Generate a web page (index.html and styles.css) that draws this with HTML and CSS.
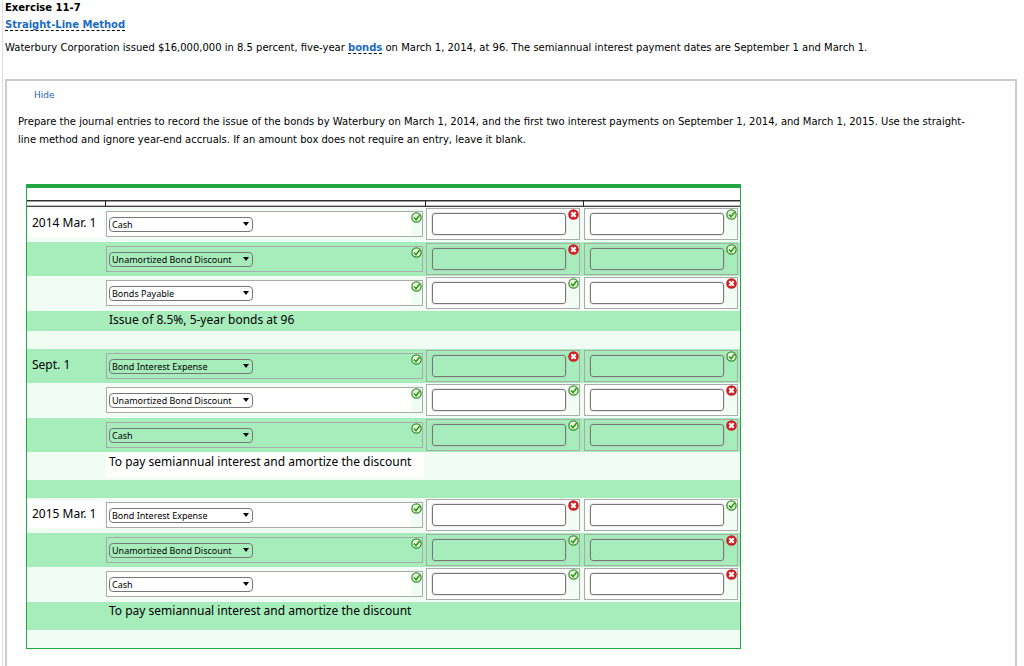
FILE: index.html
```html
<!DOCTYPE html>
<html lang="en">
<head>
  <meta charset="UTF-8" />
  <meta name="viewport" content="width=device-width, initial-scale=1.0"/>
  <title>Exercise 11-7</title>
  <link rel="stylesheet" href="styles.css">
</head>
<body>
  <svg class="sprite" width="0" height="0" aria-hidden="true">
    <symbol id="ok" viewBox="0 0 11 11" preserveAspectRatio="xMidYMin">
      <circle cx="5.5" cy="5.5" r="4.6" fill="#e9fbe0" stroke="#3b8f2c" stroke-width="1.3"/>
      <path d="M3 5.5l2 2.2L8.6 3" fill="none" stroke="#2b9a12" stroke-width="1.6"/>
    </symbol>
    <symbol id="bad" viewBox="0 0 11 11" preserveAspectRatio="xMidYMin">
      <circle cx="5.5" cy="5.5" r="5.3" fill="#cf1d22"/>
      <path d="M3.300 3.300l4.400 4.400M7.700 3.300L3.300 7.700" fill="none" stroke="#fff" stroke-width="2.2"/>
    </symbol>
  </svg>

  <h1>Exercise 11-7</h1>
  <h2><a class="term" href="#">Straight-Line Method</a></h2>
  <p class="intro">Waterbury Corporation issued $16,000,000 in 8.5 percent, five-year <a class="term" href="#">bonds</a> on March 1, 2014, at 96. The semiannual interest payment dates are September 1 and March 1.</p>

  <div class="panel">
    <a class="hide" href="#">Hide</a>
    <p class="question">Prepare the journal entries to record the issue of the bonds by Waterbury on March 1, 2014, and the first two interest payments on September 1, 2014, and March 1, 2015. Use the straight-line method and ignore year-end accruals. If an amount box does not require an entry, leave it blank.</p>

    <table class="journal">
      <colgroup>
        <col class="col-date"><col class="col-account"><col class="col-amount"><col class="col-amount">
      </colgroup>
      <thead>
        <tr class="band"><td colspan="4"></td></tr>
        <tr class="rule"><td></td><td></td><td></td><td></td></tr>
      </thead>
      <tbody>
        <tr class="light">
          <td class="date"><div>2014 Mar. 1</div></td>
          <td><div class="box account"><select aria-label="Account 1"><option>Cash</option></select><svg class="mark"><use href="#ok"/></svg></div></td>
          <td><div class="box amount"><input type="text" aria-label="Debit 1"><svg class="mark"><use href="#bad"/></svg></div></td>
          <td><div class="box amount"><input type="text" aria-label="Credit 1"><svg class="mark"><use href="#ok"/></svg></div></td>
        </tr>
        <tr class="green">
          <td></td>
          <td><div class="box account"><select aria-label="Account 2"><option>Unamortized Bond Discount</option></select><svg class="mark"><use href="#ok"/></svg></div></td>
          <td><div class="box amount"><input type="text" aria-label="Debit 2"><svg class="mark"><use href="#bad"/></svg></div></td>
          <td><div class="box amount"><input type="text" aria-label="Credit 2"><svg class="mark"><use href="#ok"/></svg></div></td>
        </tr>
        <tr class="light">
          <td></td>
          <td><div class="box account"><select aria-label="Account 3"><option>Bonds Payable</option></select><svg class="mark"><use href="#ok"/></svg></div></td>
          <td><div class="box amount"><input type="text" aria-label="Debit 3"><svg class="mark"><use href="#ok"/></svg></div></td>
          <td><div class="box amount"><input type="text" aria-label="Credit 3"><svg class="mark"><use href="#bad"/></svg></div></td>
        </tr>
        <tr class="green note short">
          <td></td>
          <td><div>Issue of 8.5%, 5-year bonds at 96</div></td>
          <td></td>
          <td></td>
        </tr>
        <tr class="light gap"><td colspan="4"></td></tr>

        <tr class="green">
          <td class="date"><div>Sept. 1</div></td>
          <td><div class="box account"><select aria-label="Account 4"><option>Bond Interest Expense</option></select><svg class="mark"><use href="#ok"/></svg></div></td>
          <td><div class="box amount"><input type="text" aria-label="Debit 4"><svg class="mark"><use href="#bad"/></svg></div></td>
          <td><div class="box amount"><input type="text" aria-label="Credit 4"><svg class="mark"><use href="#ok"/></svg></div></td>
        </tr>
        <tr class="light">
          <td></td>
          <td><div class="box account"><select aria-label="Account 5"><option>Unamortized Bond Discount</option></select><svg class="mark"><use href="#ok"/></svg></div></td>
          <td><div class="box amount"><input type="text" aria-label="Debit 5"><svg class="mark"><use href="#ok"/></svg></div></td>
          <td><div class="box amount"><input type="text" aria-label="Credit 5"><svg class="mark"><use href="#bad"/></svg></div></td>
        </tr>
        <tr class="green">
          <td></td>
          <td><div class="box account"><select aria-label="Account 6"><option>Cash</option></select><svg class="mark"><use href="#ok"/></svg></div></td>
          <td><div class="box amount"><input type="text" aria-label="Debit 6"><svg class="mark"><use href="#ok"/></svg></div></td>
          <td><div class="box amount"><input type="text" aria-label="Credit 6"><svg class="mark"><use href="#bad"/></svg></div></td>
        </tr>
        <tr class="light note">
          <td></td>
          <td><div>To pay semiannual interest and amortize the discount</div></td>
          <td></td>
          <td></td>
        </tr>
        <tr class="green gap"><td colspan="4"></td></tr>

        <tr class="light">
          <td class="date"><div>2015 Mar. 1</div></td>
          <td><div class="box account"><select aria-label="Account 7"><option>Bond Interest Expense</option></select><svg class="mark"><use href="#ok"/></svg></div></td>
          <td><div class="box amount"><input type="text" aria-label="Debit 7"><svg class="mark"><use href="#bad"/></svg></div></td>
          <td><div class="box amount"><input type="text" aria-label="Credit 7"><svg class="mark"><use href="#ok"/></svg></div></td>
        </tr>
        <tr class="green">
          <td></td>
          <td><div class="box account"><select aria-label="Account 8"><option>Unamortized Bond Discount</option></select><svg class="mark"><use href="#ok"/></svg></div></td>
          <td><div class="box amount"><input type="text" aria-label="Debit 8"><svg class="mark"><use href="#ok"/></svg></div></td>
          <td><div class="box amount"><input type="text" aria-label="Credit 8"><svg class="mark"><use href="#bad"/></svg></div></td>
        </tr>
        <tr class="light">
          <td></td>
          <td><div class="box account"><select aria-label="Account 9"><option>Cash</option></select><svg class="mark"><use href="#ok"/></svg></div></td>
          <td><div class="box amount"><input type="text" aria-label="Debit 9"><svg class="mark"><use href="#ok"/></svg></div></td>
          <td><div class="box amount"><input type="text" aria-label="Credit 9"><svg class="mark"><use href="#bad"/></svg></div></td>
        </tr>
        <tr class="green note">
          <td></td>
          <td><div>To pay semiannual interest and amortize the discount</div></td>
          <td></td>
          <td></td>
        </tr>
        <tr class="light gap"><td colspan="4"></td></tr>
      </tbody>
    </table>
  </div>
</body>
</html>
```

FILE: styles.css
```css
* {
  box-sizing: border-box;
}
body {
  display: flex;
  flex-direction: column;
  min-height: 100vh;
  margin: 0 0 0 2px;
  padding: 0 7px 0 2px;
  border-left: 1px solid #ddd;
  background: white;
  color: #000;
  font-family: Verdana, "DejaVu Sans", sans-serif;
  font-size: 10px;
  line-height: 18px;
}
.sprite {
  position: absolute;
}
h1, h2 {
  margin: 0;
  font-size: 10px;
  line-height: 18px;
}
h1 {
  line-height: 15px;
}
h2 {
  padding-top: 1px;
}
.term {
  color: #1a6bc4;
  font-weight: bold;
  text-decoration: none;
  border-bottom: 1px dashed #000;
}
.intro {
  margin: 5px 0 22px;
}
.panel {
  flex: 1;
  padding: 5px 38px 16px 11px;
  border: 2px solid #ccc;
  border-bottom: none;
}
.hide {
  display: block;
  margin-left: 16px;
  color: #1a5fae;
  font-size: 9px;
  text-decoration: none;
}
.question {
  margin: 9px 0 35px;
}
.journal {
  width: 100%;
  max-width: 715px;
  margin-left: 8px;
  table-layout: fixed;
  border-spacing: 0;
  border: 1px solid #1fa843;
  border-top-width: 4px;
  font-family: "Lucida Grande", "Noto Sans", sans-serif;
  font-size: 12px;
  line-height: 18px;
}
.col-date {
  width: 78px;
}
.col-account {
  width: 320px;
}
td {
  height: 34px;
  padding: 0 1px;
  vertical-align: top;
}
.light td {
  height: 35px;
  background: #f0fcf4;
}
.green td {
  background: #a7edbb;
}
.band td {
  height: 12px;
}
.rule td {
  height: 7px;
  border-top: 1px solid #333;
  border-bottom: 1px solid #444;
  box-shadow: inset 0 1px #999, inset 0 -1px #bbb;
}
.rule td + td {
  border-left: 1px solid #222;
}
.light.gap td, .green.gap td {
  height: 18px;
}
.light.note td, .green.note td {
  height: 28px;
}
.green.short td {
  height: 20px;
}
.note div {
  height: 25px;
  padding-left: 3px;
  white-space: nowrap;
}
.short div {
  height: 20px;
}
.light.note div {
  margin-top: 1px;
}
.date div {
  margin: 2px 0;
  padding: 5px 4px;
  white-space: nowrap;
}
.light .date div, .light.note div {
  background: white;
}
.box {
  display: flex;
  align-items: center;
  justify-content: space-between;
  border: 1px solid #aaa;
}
.light .box {
  background: white;
}
.account {
  width: 317px;
  height: 26px;
  margin-top: 4px;
  padding-left: 2px;
}
.amount {
  width: 154px;
  height: 32px;
  margin-top: 1px;
  padding-left: 5px;
}
.mark {
  align-self: stretch;
  width: 11px;
  height: auto;
}
.light .mark {
  background: #f0fcf4;
}
select {
  width: 144px;
  height: 15px;
  padding: 0 16px 0 2px;
  border: 1px solid #777;
  border-radius: 4px;
  appearance: none;
  background: transparent url("data:image/svg+xml,%3Csvg xmlns='http://www.w3.org/2000/svg' width='6' height='4'%3E%3Cpath d='M0 0h6L3 4z'/%3E%3C/svg%3E") no-repeat right 3px center;
  color: #000;
  font-family: "Lucida Grande", "Noto Sans", sans-serif;
  font-size: 9px;
  line-height: 13px;
}
input {
  width: 134px;
  height: 22px;
  padding: 2px 4px;
  border: 1px solid #777;
  border-radius: 3px;
  background: transparent;
  box-shadow: 0 0 2px #aaa;
}
```
